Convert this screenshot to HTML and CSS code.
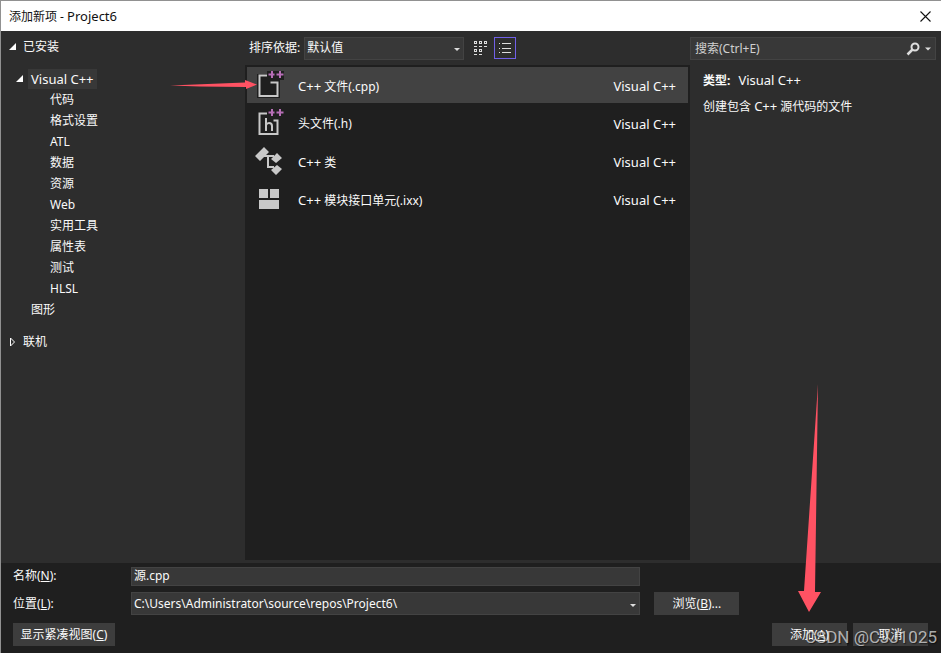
FILE: index.html
```html
<!DOCTYPE html>
<html lang="zh-CN">
<head>
<meta charset="utf-8">
<title>添加新项 - Project6</title>
<link rel="stylesheet" href="styles.css">
</head>
<body>
<div class="dialog">
  <header class="titlebar">
    <h1>添加新项 - <span class="latin">Project6</span></h1>
    <button class="close" type="button" aria-label="关闭"><svg width="11" height="11" viewBox="0 0 11 11"><path d="M.5.5l10 10M10.500.5l-10 10" stroke="#111" stroke-width="1.100"/></svg></button>
  </header>
  <main class="content">
    <nav class="tree">
      <div class="node level-0 first"><svg class="twisty" width="8" height="8" viewBox="0 0 8 8"><path d="M7 0v7H0z" fill="#fff"/></svg><span>已安装</span></div>
      <div class="node level-1"><svg class="twisty" width="8" height="8" viewBox="0 0 8 8"><path d="M7 0v7H0z" fill="#fff"/></svg><span class="current latin">Visual C++</span></div>
      <ul class="leaves">
        <li>代码</li><li>格式设置</li><li>ATL</li><li>数据</li><li>资源</li><li>Web</li><li>实用工具</li><li>属性表</li><li>测试</li><li>HLSL</li>
      </ul>
      <div class="node level-1 plain"><span>图形</span></div>
      <div class="node level-0 last"><svg class="twisty" width="8" height="10" viewBox="0 0 8 10"><path d="M1.500 1v8L5.500 5z" fill="none" stroke="#fff"/></svg><span>联机</span></div>
    </nav>
    <section class="center">
      <div class="toolbar">
        <label for="sort">排序依据:</label>
        <div class="select-wrap sort"><select id="sort"><option>默认值</option></select></div>
        <button class="view" type="button" aria-label="小图标"><svg width="14" height="14" viewBox="0 0 14 14" shape-rendering="crispEdges"><g fill="none" stroke="#ddd"><path d="M.5.5h2v2h-2zM5.500.5h2v2h-2zM10.500.5h2v2h-2zM.5 8.500h2v2h-2zM5.500 8.500h2v2h-2z"/><path d="M0 5.500h3M5 5.500h3M10 5.500h3M0 13.500h3M5 13.500h3"/></g></svg></button>
        <button class="view active" type="button" aria-label="列表"><svg width="12" height="11" viewBox="0 0 12 11" shape-rendering="crispEdges"><path d="M0 .5h1M3 .5h9M0 5.500h1M3 5.500h9M0 9.500h1M3 9.500h9" stroke="#ddd"/></svg></button>
      </div>
      <ul class="templates">
        <li class="selected"><svg width="32" height="32" viewBox="0 0 32 32"><path d="M4 4h10V1h17v9h-4v18H4z" fill="#1f1f1f"/><path d="M14 5.500H6.500v20.500h18V12.500h-7" fill="none" stroke="#c8c8c8" stroke-width="2"/><path d="M19 1v7M15.500 4.500h6M27 1v7M23.500 4.500h7" stroke="#b66eb6" stroke-width="2"/></svg><span class="name"><span class="latin">C++</span> 文件(.cpp)</span><span class="latin">Visual C++</span></li>
        <li><svg width="32" height="32" viewBox="0 0 32 32"><path d="M14 5.500H6.500v20.500h18V12.500h-4" fill="none" stroke="#c8c8c8" stroke-width="2"/><path d="M13 10v13M13 17q1-2 3-2 3 0 3 3v5" fill="none" stroke="#c8c8c8" stroke-width="2"/><path d="M19 1v7M15.500 4.500h6M27 1v7M23.500 4.500h7" stroke="#b66eb6" stroke-width="2"/></svg><span class="name">头文件(.h)</span><span class="latin">Visual C++</span></li>
        <li><svg width="32" height="32" viewBox="0 0 32 32"><g fill="#c8c8c8"><path d="M2 10l9-9 5 5-9 9zM18 13l6-6 5 5-6 5zM18 24l6-5 5 4-6 6z"/><path d="M10 9h11v2h-5v9h5v2h-7V11h-4z"/></g></svg><span class="name"><span class="latin">C++</span> 类</span><span class="latin">Visual C++</span></li>
        <li><svg width="32" height="32" viewBox="0 0 32 32"><path d="M6 5h9v9H6zM17 5h9v9h-9zM6 16h20v9H6z" fill="#c8c8c8"/></svg><span class="name"><span class="latin">C++</span> 模块接口单元(.ixx)</span><span class="latin">Visual C++</span></li>
      </ul>
      <svg class="arrow-side" width="88" height="12" viewBox="0 0 88 12"><path d="M0 5.500L75 2.500V0L87 4.500 76 9V7L30 6.500z" fill="#ff5263"/></svg>
    </section>
    <aside class="details">
      <div class="search"><input type="text" placeholder="搜索(Ctrl+E)" aria-label="搜索"><svg width="26" height="14" viewBox="0 0 26 14"><circle cx="10" cy="5" r="3.500" fill="none" stroke="#ddd" stroke-width="2"/><path d="M7.500 7.500L2.500 12.500" stroke="#ddd" stroke-width="2.500"/><path d="M20 5.500h6L23 8.500z" fill="#ddd"/></svg></div>
      <p><b>类型:</b><span class="type latin">Visual C++</span></p>
      <p>创建包含 <span class="latin">C++</span> 源代码的文件</p>
    </aside>
  </main>
  <footer class="form">
    <label for="name">名称(<u>N</u>):</label>
    <input class="field" id="name" type="text" value="源.cpp">
    <label class="row-2" for="location">位置(<u>L</u>):</label>
    <div class="select-wrap"><select id="location"><option>C:\Users\Administrator\source\repos\Project6\</option></select></div>
    <button class="browse" type="button">浏览(<u>B</u>)...</button>
    <div class="actions">
      <button class="compact" type="button">显示紧凑视图(<u>C</u>)</button>
      <button class="ok" type="button">添加(<u>A</u>)</button>
      <button class="ok" type="button">取消</button>
    </div>
  </footer>
  <svg class="arrow-down" width="24" height="228" viewBox="0 0 24 228"><path d="M20 0L17 208h6L11 228 0 207h6z" fill="#ff5263"/></svg>
  <div class="watermark">CSDN @CJJ1025</div>
</div>
</body>
</html>
```
FILE: styles.css
```css
* { box-sizing: border-box; }
body {
  margin: 0;
  background: #1f1f1f;
  color: #fafafa;
  font: 12px/20px "Noto Sans", "Noto Sans CJK SC", sans-serif;
}
button, input, select { font: inherit; color: inherit; border-radius: 0; }
ul { list-style: none; margin: 0; padding: 0; }
svg { display: block; flex: none; }
.latin { font-size: 13px; }

.dialog {
  position: relative;
  display: flex;
  flex-direction: column;
  min-height: 100vh;
  border: 1px solid #919191;
  border-width: 1px 0 0 1px;
  overflow: hidden;
}
.titlebar {
  display: flex;
  align-items: center;
  justify-content: space-between;
  height: 30px;
  padding-left: 8px;
  background: #fff;
  color: #111;
}
.titlebar h1 { margin: 0; font-size: 12px; font-weight: 400; }
.close { padding: 8px 10px; border: 0; background: none; }

.content {
  flex: 1;
  display: grid;
  grid-template-columns: 244px minmax(0, 445fr) minmax(0, 251fr);
  background: #2d2d2d;
  padding-bottom: 3px;
}
.node { display: flex; align-items: center; gap: 4px; height: 21px; }
.twisty { width: 8px; }
.level-0 { padding-left: 8px; gap: 6px; }
.level-1 { padding-left: 15px; }
.first { margin: 5px 0 11px; }
.last { margin-top: 11px; }
.plain { padding-left: 30px; }
.current { padding: 0 3px; background: #383838; }
.leaves { padding-left: 49px; line-height: 21px; }

.center { position: relative; display: flex; flex-direction: column; }
.toolbar { display: flex; align-items: center; height: 34px; padding-left: 4px; }
.select-wrap { position: relative; }
.select-wrap::after {
  content: "";
  position: absolute;
  right: 4px;
  top: 50%;
  border: 3px solid transparent;
  border-top-color: #ddd;
  border-bottom: 0;
}
select {
  display: block;
  appearance: none;
  width: 100%;
  height: 23px;
  padding: 0 2px;
  border: 1px solid #434343;
  background: #383838;
}
.sort { width: 160px; margin: 0 6px 0 4px; }
.view { display: grid; place-items: center; width: 22px; height: 22px; padding: 0; border: 0; background: none; }
.view + .view { margin-left: 2px; }
.view.active { border: 1px solid #7160e8; }
.templates { flex: 1; padding: 2px; background: #1f1f1f; }
.templates li { display: flex; align-items: center; height: 36px; margin-bottom: 2px; padding: 2px 12px 0 6px; }
.templates .selected { background: #424242; }
.templates .name { flex: 1; margin-left: 13px; }
.arrow-side { position: absolute; left: -75px; top: 49px; }

.details { padding: 6px 5px 0 0; }
.search { display: flex; align-items: center; height: 23px; margin-bottom: 10px; padding: 0 4px; border: 1px solid #434343; background: #383838; }
.search input { flex: 1; min-width: 0; padding: 0; border: 0; background: none; }
.search input::placeholder { color: #d0d0d0; opacity: 1; }
.details p { margin: 0 0 5px 13px; }
.type { margin-left: 8px; }

.form {
  display: grid;
  grid-template-columns: 118px minmax(0, 510fr) minmax(0, 301fr);
  align-items: center;
  row-gap: 6px;
  padding: 3px 0 7px 12px;
}
.field { width: 100%; height: 19px; padding: 0 2px; border: 1px solid #434343; background: #383838; }
.row-2 { grid-column: 1; }
.form button { height: 23px; padding: 0; border: 0; background: #3d3d3d; }
.browse { width: 85px; margin-left: 14px; }
.actions { grid-column: 1 / -1; display: flex; gap: 6px; padding-right: 13px; margin-top: 2px; }
.form .compact { width: 102px; margin-right: auto; }
.ok { width: 75px; }
.arrow-down { position: absolute; right: 119px; bottom: 41px; }
.watermark {
  position: absolute;
  right: 4px;
  bottom: 6px;
  font: 17px/20px Roboto, sans-serif;
  color: rgba(255, 255, 255, .65);
  text-shadow: 1px 1px 1px #0008;
  pointer-events: none;
}
```
